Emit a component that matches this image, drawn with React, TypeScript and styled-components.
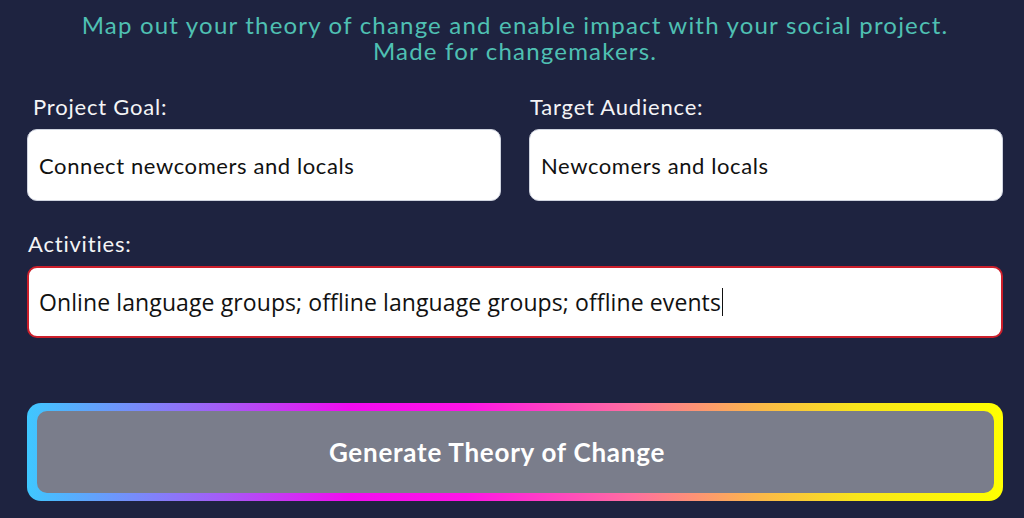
import React from "react";
import styled, {createGlobalStyle} from "styled-components";

const GlobalStyle = createGlobalStyle`
  html, body {
    margin: 0;
    padding: 0;
    background: #1e2340;
  }
  body {
    font-family: "Lato", "Open Sans", sans-serif;
  }
`

const Page = styled.div`
  width: 1024px;
  height: 518px;
  overflow: hidden;
  box-sizing: border-box;
  padding: 12px 21px 0 27px;
  background: #1e2340;
`

const Subtitle = styled.p`
  margin: 0;
  text-align: center;
  color: #4fc0b3;
  font-size: 24px;
  line-height: 26px;
  letter-spacing: 1.2px;
`

const SubtitleLine = styled.span`
  display: block;
  height: 26px;
`

const Row = styled.div`
  display: grid;
  grid-template-columns: 1fr 1fr;
  column-gap: 28px;
  margin-top: 31px;
`

const Group = styled.div`
  display: flex;
  flex-direction: column;
`

const Label = styled.label<{ $indent?: number }>`
  color: #f4f4f6;
  font-size: 22px;
  line-height: 24px;
  letter-spacing: 0.8px;
  margin: 0 0 10px ${p => p.$indent ?? 1}px;
`

const Field = styled.div<{ $invalid?: boolean }>`
  box-sizing: border-box;
  height: 72px;
  display: flex;
  align-items: center;
  background: #fff;
  border-radius: 10px;
  border: ${p => p.$invalid ? "2px solid #cc1f2b" : "1px solid #cfd3df"};
  padding: 0 11px 0 ${p => p.$invalid ? 10 : 11}px;
  color: #111;
  font-size: 22px;
  letter-spacing: 0.6px;
  white-space: nowrap;
`

const PlainText = styled.span`
  font-family: "Open Sans", "Noto Sans", sans-serif;
  font-size: 23px;
  letter-spacing: 0.1px;
`

const Caret = styled.span`
  display: inline-block;
  width: 1px;
  height: 28px;
  background: #111;
  margin-left: 1px;
`

const ActivitiesGroup = styled(Group)`
  margin-top: 31px;
`

const GradientFrame = styled.div`
  margin-top: 65px;
  height: 98px;
  box-sizing: border-box;
  padding: 8px 9px 8px 10px;
  border-radius: 14px;
  background: linear-gradient(90deg, #3fc7ff 0%, #a55cf6 20%, #f20cf0 33%, #ff14e6 45%, #ff6fa0 62%, #fbb84a 75%, #f8e51c 85%, #ffff00 100%);
`

const GenerateButton = styled.button`
  width: 100%;
  height: 100%;
  border: none;
  border-radius: 10px;
  background: #7a7d8b;
  color: #fff;
  font-family: inherit;
  font-size: 26px;
  font-weight: 700;
  letter-spacing: 0.75px;
  padding: 0 37px 0 0;
  cursor: pointer;
`

export default function App() {
    return (
        <>
            <GlobalStyle/>
            <Page>
                <Subtitle>
                    <SubtitleLine>Map out your theory of change and enable impact with your social project.</SubtitleLine>
                    <SubtitleLine>Made for changemakers.</SubtitleLine>
                </Subtitle>

                <Row>
                    <Group>
                        <Label $indent={6}>Project Goal:</Label>
                        <Field>Connect newcomers and locals</Field>
                    </Group>
                    <Group>
                        <Label>Target Audience:</Label>
                        <Field>Newcomers and locals</Field>
                    </Group>
                </Row>

                <ActivitiesGroup>
                    <Label>Activities:</Label>
                    <Field $invalid>
                        <PlainText>Online language groups; offline language groups; offline events</PlainText>
                        <Caret/>
                    </Field>
                </ActivitiesGroup>

                <GradientFrame>
                    <GenerateButton>Generate Theory of Change</GenerateButton>
                </GradientFrame>
            </Page>
        </>
    )
}
